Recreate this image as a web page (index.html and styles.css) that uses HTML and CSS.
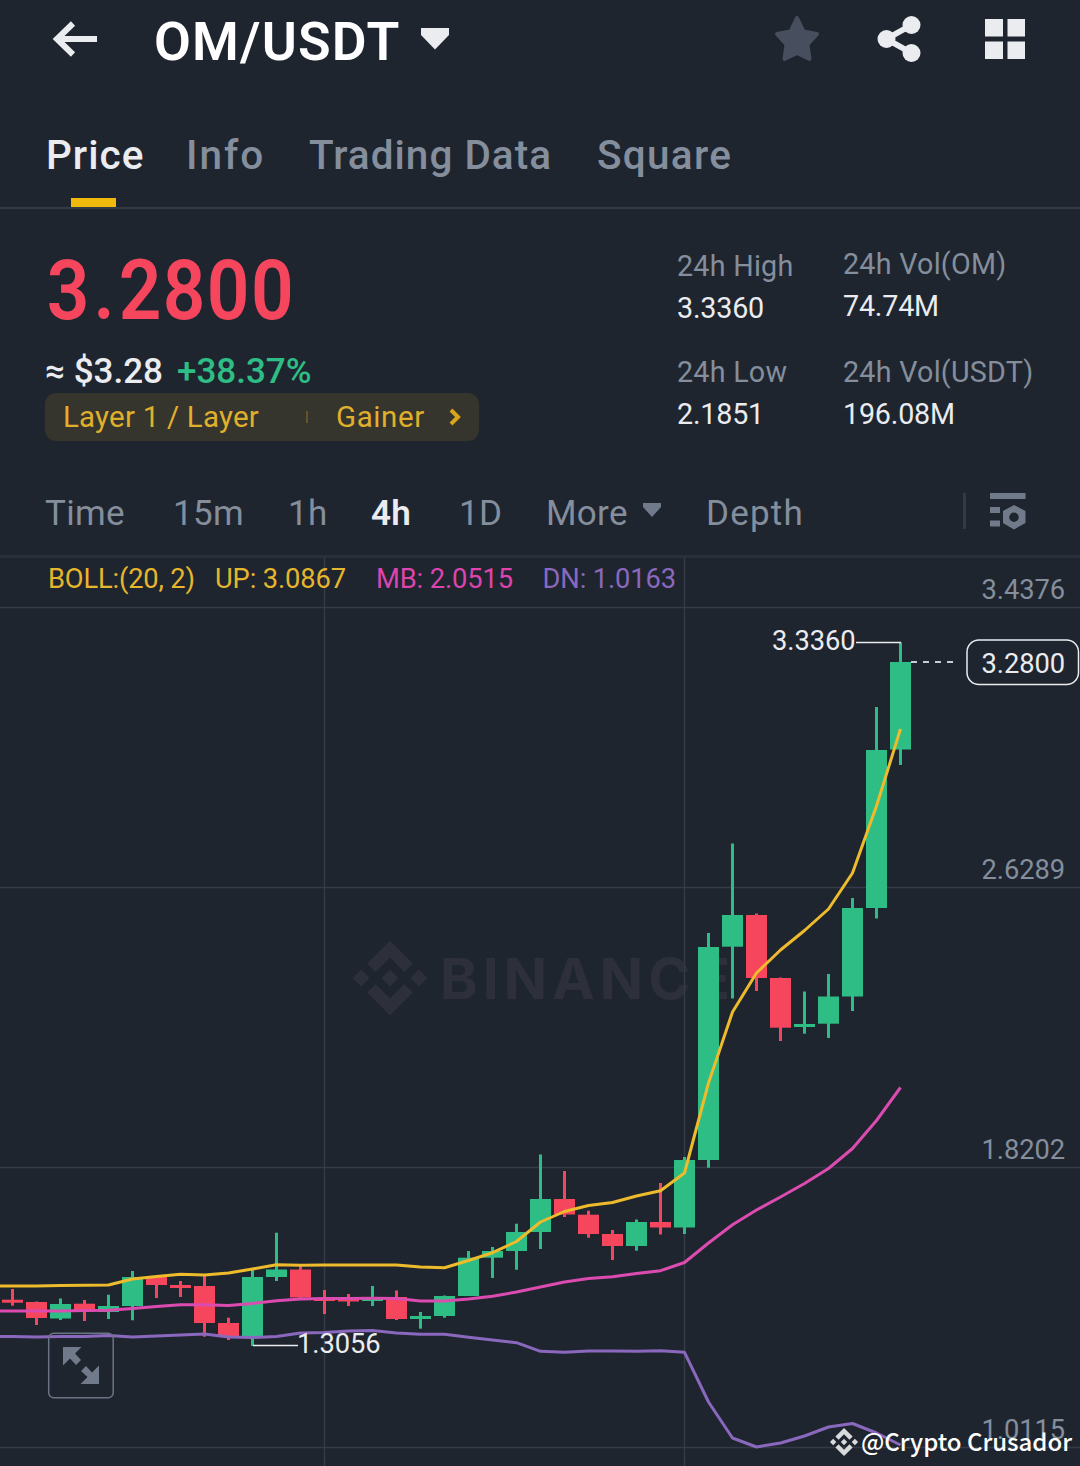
FILE: index.html
```html
<!DOCTYPE html>
<html lang="en">
<head>
<meta charset="utf-8">
<title>OM/USDT</title>
<link rel="stylesheet" href="styles.css">
</head>
<body>
<header class="topbar">
  <svg class="back" viewBox="0 0 46 36"><path d="M21 2.500L5 18L21 33.500M4 18H45" fill="none" stroke="#eaecef" stroke-width="6"/></svg>
  <h1 class="pair">OM/USDT</h1>
  <svg class="pair-caret" viewBox="0 0 28 22"><path d="M0 0H28V7L14 21.500L0 7Z" fill="#eaecef"/></svg>
  <div class="actions">
    <svg class="star" viewBox="0 0 46 48"><path d="M23 3L29.500 16.500L43 19L33.500 29.500L35.500 44L23 38L10.500 44L12.500 29.500L3 19L16.500 16.500Z" fill="#474f5e" stroke="#474f5e" stroke-width="4" stroke-linejoin="round"/></svg>
    <svg class="share" viewBox="0 0 44 46"><g fill="#eaecef"><circle cx="9.500" cy="23" r="9"/><circle cx="34.500" cy="9" r="9"/><circle cx="34.500" cy="37" r="9"/></g><path d="M34.500 9L9.500 23L34.500 37" fill="none" stroke="#eaecef" stroke-width="6"/></svg>
    <svg class="grid" viewBox="0 0 40 40"><path d="M0 0h18v17.500H0zM22.500 0H40v17.500H22.500zM0 22.500h18V40H0zM22.500 22.500H40V40H22.500z" fill="#eaecef"/></svg>
  </div>
</header>

<nav class="tabs">
  <span class="tab tab-price active">Price</span>
  <span class="tab tab-info">Info</span>
  <span class="tab tab-data">Trading Data</span>
  <span class="tab tab-square">Square</span>
</nav>

<section class="summary">
  <div class="quote">
    <div class="last">3<span class="dot">.</span>2800</div>
    <div class="fiat"><span class="usd">≈ $3.28</span><span class="change">+38.37%</span></div>
    <div class="tags">
      <span class="tag-layer">Layer 1 / Layer</span>
      <i class="tag-sep"></i>
      <span class="tag-gainer">Gainer</span>
      <svg class="tag-arrow" viewBox="0 0 12 18"><path d="M2 2L9 9L2 16" fill="none" stroke="#d9a51c" stroke-width="4"/></svg>
    </div>
  </div>
  <dl class="stats stats-range">
    <dt>24h High</dt><dd>3.3360</dd>
    <dt>24h Low</dt><dd>2.1851</dd>
  </dl>
  <dl class="stats stats-volume">
    <dt>24h Vol(OM)</dt><dd>74.74M</dd>
    <dt>24h Vol(USDT)</dt><dd>196.08M</dd>
  </dl>
</section>

<nav class="frames">
  <span>Time</span>
  <span>15m</span>
  <span>1h</span>
  <span class="active">4h</span>
  <span>1D</span>
  <span>More<svg class="more-caret" viewBox="0 0 18 14"><path d="M0 0H18V4L9 14L0 4Z" fill="#717a8a"/></svg></span>
  <span class="depth">Depth</span>
  <i class="frames-sep"></i>
  <svg class="settings" viewBox="0 0 36 37"><path d="M0 0H35.500V6H0zM0 14H10V20H0zM0 27.500H10V33.500H0zM24 12L35.500 18V30L24 36.500L13 30V18ZM24 19.500A4.700 4.700 0 1 0 24 29A4.700 4.700 0 1 0 24 19.500Z" fill="#717a8a" fill-rule="evenodd"/></svg>
</nav>

<svg class="chart" viewBox="0 558 1080 908">
  <defs>
    <path id="mark" d="M16.624 13.9202l2.7175 2.7154-7.353 7.353-7.353-7.352 2.7175-2.7164 4.6355 4.6595 4.6356-4.6595zm4.6366-4.6366L24 12l-2.7154 2.7164L18.5682 12l2.6924-2.7164zm-9.272.001l2.7163 2.6914-2.7164 2.7174v-.001L9.2721 12l2.7164-2.7154zm-9.2722-.001L5.4088 12l-2.6914 2.6924L0 12l2.7164-2.7164zM11.9885.0115l7.353 7.329-2.7174 2.7154-4.6356-4.6356-4.6355 4.6595-2.7174-2.7154 7.353-7.353z"/>
  </defs>
  <g class="watermark">
    <use href="#mark" transform="translate(352.700 940.700) scale(3.110)"/>
    <text x="440" y="998.500" textLength="290">BINANCE</text>
  </g>
  <path class="gridlines" d="M0 607.500H1080M0 887.500H1080M0 1167.500H1080M0 1447.500H1080M324.500 558V1466M684.500 558V1466"/>
  <g id="candles"></g>
  <g id="bands"></g>
  <g class="legend">
    <text class="up" x="48" y="587.700" textLength="147">BOLL:(20, 2)</text>
    <text class="up" x="215" y="587.700" textLength="131">UP: 3.0867</text>
    <text class="mb" x="376" y="587.700" textLength="137">MB: 2.0515</text>
    <text class="dn" x="542.500" y="587.700" textLength="133.500">DN: 1.0163</text>
  </g>
  <g class="axis">
    <text x="981.500" y="599" textLength="83.500">3.4376</text>
    <text x="981.500" y="879" textLength="83.500">2.6289</text>
    <text x="981.500" y="1159" textLength="83.500">1.8202</text>
    <text x="981.500" y="1439" textLength="83.500">1.0115</text>
  </g>
  <g class="callouts">
    <path d="M856 642.500H901M253 1345.500H298"/>
    <path class="dash" d="M911 662H956"/>
    <rect x="967" y="640" width="111.500" height="44.500" rx="12"/>
    <text x="772" y="650" textLength="83.500">3.3360</text>
    <text x="981.500" y="672.700" textLength="83.500">3.2800</text>
    <text x="297" y="1353" textLength="83.500">1.3056</text>
  </g>
  <g class="expand">
    <rect x="48.700" y="1333.200" width="64.500" height="64.500" rx="5"/>
    <path d="M63 1347H81.500L75 1353.500L81 1360L76 1365L70 1358.500L63 1365.500ZM99 1384H80.500L87.500 1377L81 1371L86 1366L92 1372.500L99 1365.500Z"/>
  </g>
  <g class="credit">
    <use href="#mark" transform="translate(830 1428) scale(1.170)"/>
    <text x="861" y="1450.700" textLength="211">@Crypto Crusador</text>
  </g>
</svg>
<script src="chart.js"></script>
</body>
</html>
```
FILE: styles.css
```css
* { box-sizing: border-box; }
body {
  margin: 0;
  width: 1080px;
  height: 1466px;
  overflow: hidden;
  background: #1f252f;
  color: #eaecef;
  font-family: Roboto, "Liberation Sans", sans-serif;
}
svg { display: block; flex: none; }

.topbar { display: flex; align-items: center; height: 84px; padding: 0 55px 0 52px; }
.back { width: 46px; height: 36px; margin-top: -6px; }
.pair { margin: 0 0 0 56px; width: 267px; font-size: 53.500px; line-height: 60px; font-weight: 600; letter-spacing: 1.200px; color: #fff; white-space: nowrap; }
.pair-caret { width: 28px; height: 22px; margin-top: -7px; }
.actions { display: flex; align-items: center; margin: -6px 0 0 auto; }
.star { width: 46px; height: 48px; margin-right: 57px; }
.share { width: 44px; height: 46px; margin-right: 64px; }
.grid { width: 40px; height: 40px; }

.tabs { display: flex; height: 125px; padding: 46px 0 0 45px; border-bottom: 2px solid #333a45; }
.tab { position: relative; padding-top: 1px; font-size: 40.500px; line-height: 48px; font-weight: 500; letter-spacing: 1px; color: #848e9c; white-space: nowrap; }
.tab.active { color: #eaecef; }
.tab.active::after { content: ""; position: absolute; left: 26px; bottom: 0; width: 45px; height: 9px; background: #f0b90b; }
.tab-price { width: 141px; height: 77px; text-indent: 1px; }
.tab-info { width: 123px; letter-spacing: 2px; }
.tab-data { width: 288px; }
.tab-square { letter-spacing: 1.300px; }

.summary { display: flex; height: 261px; padding: 34px 0 0 45px; white-space: nowrap; }
.quote { width: 632px; padding-top: 6px; }
.last { width: 300px; font-size: 83px; line-height: 84px; font-weight: 600; letter-spacing: 1.500px; text-indent: 2px; color: #f6465d; transform: scaleX(.9); transform-origin: left; }
.dot { padding: 0 3px; }
.fiat { display: flex; margin-top: 16px; padding-top: 1px; font-size: 35px; line-height: 43px; font-weight: 500; }
.usd { width: 132px; }
.change { color: #2ebd85; }
.tags { display: flex; align-items: center; width: 434px; height: 48px; padding: 0 0 0 18px; border-radius: 11px; background: #35342d; font-size: 29.500px; letter-spacing: .2px; color: #e0b02c; }
.tag-layer { width: 243px; }
.tag-sep { width: 2px; height: 12px; margin-right: 28px; background: #66532a; }
.tag-gainer { width: 113px; letter-spacing: .6px; }
.tag-arrow { width: 12px; height: 18px; }
.stats { margin: 0; font-size: 28.700px; line-height: 42px; }
.stats dt { color: #848e9c; letter-spacing: .25px; }
.stats dd { margin: 0 0 24px; letter-spacing: -.2px; }
.stats-range { width: 166px; padding-top: 2px; }
.stats-range dd { margin-bottom: 22px; }

.frames { display: grid; grid-template-columns: 128px 115px 83px 88px 87px 160px 257px 27px 36px; align-items: center; height: 88px; padding: 3px 0 0 45px; border-bottom: 3px solid #2a303b; font-size: 35px; line-height: 44px; color: #848e9c; white-space: nowrap; }
.frames span { display: flex; align-items: center; letter-spacing: .3px; }
.frames .depth { letter-spacing: 1.200px; }
.frames .active { color: #eaecef; font-weight: 600; }
.more-caret { width: 18px; height: 14px; margin: -9px 0 0 15px; }
.frames-sep { width: 3px; height: 36px; margin-top: -6px; background: #333a45; }
.settings { width: 36px; height: 37px; margin-top: -5px; }

.chart { width: 1080px; height: 908px; font-size: 27.300px; }
.gridlines { stroke: #343a46; stroke-width: 1.500; }
.watermark { fill: #2d303b; }
.watermark text { font: 700 57px Inter, sans-serif; }
.rise { fill: #2ebd85; }
.fall { fill: #f6465d; }
.band { fill: none; stroke-width: 3; stroke-linejoin: round; }
.band.up { stroke: #edbb2b; }
.band.mb { stroke: #dc4bb0; }
.band.dn { stroke: #8a68be; }
.legend .up { fill: #e6b62c; }
.legend .mb { fill: #dc44ae; }
.legend .dn { fill: #8a68be; }
.axis { fill: #848e9c; }
.callouts path, .callouts rect { fill: none; stroke: #eaecef; stroke-width: 1.500; }
.callouts .dash { stroke-width: 2; stroke: #c9ccd2; stroke-dasharray: 6 6; }
.callouts text { fill: #eaecef; }
.expand rect { fill: none; stroke: #6b7485; stroke-width: 1.500; }
.expand path { fill: #717a8a; }
.credit { fill: #d9dadc; }
.credit text { fill: #fff; font: 500 24px "Noto Sans CJK SC", "Noto Sans", sans-serif; }
```
FILE: chart.js
```js
// Candles: [rising, body top, body bottom, wick top, wick bottom], 24px apart.
const candles = [
  [0,1299.7,1302.7,1289,1305.7],[0,1302,1318,1301.5,1325],[1,1304,1318.5,1298.5,1320],
  [0,1303.7,1312,1300,1321],[1,1306,1312,1294.7,1319],[1,1277,1306,1271,1320.3],
  [0,1277,1285,1277,1298],[0,1285,1288,1281,1297],[0,1286,1323,1276,1336.7],
  [0,1323,1336.7,1317.7,1340],[1,1277,1336.7,1269.5,1346],[1,1269.5,1277,1232.7,1281],
  [0,1269.5,1297.5,1266,1298],[0,1298,1301,1290,1314],[0,1298.5,1301.5,1294,1306],
  [1,1298,1301,1286,1306],[0,1297,1319,1290.5,1320],[1,1316,1319,1312,1328.7],
  [1,1296,1316,1295.5,1317.7],[1,1257.7,1296,1251,1296],[1,1251,1257.7,1247,1278],
  [1,1232,1251,1223.7,1269.7],[1,1199,1232,1154.5,1249],[0,1199,1214.5,1171,1217],
  [0,1214.7,1234,1210.7,1237.7],[0,1234,1246,1230,1260],[1,1222,1246,1219.5,1250.7],
  [0,1222,1227.5,1183,1234.5],[1,1160,1227.5,1157,1234],[1,947,1160,933,1167.7],
  [1,915,946.7,843.5,998.5],[0,915,978,913.5,991],[0,978,1027.7,977.5,1041],
  [1,1024,1027,991.5,1033.7],[1,996.5,1023.7,974,1038],[1,908,996.5,898,1011],
  [1,750,908,707,918.5],[1,662,749.5,642.5,765]
];
const bands = {
  up: [1286,1286,1285.5,1285.3,1285,1279,1276.5,1274.3,1275,1273,1269,1264.7,1265.3,1265,1265,1265,1265,1267,1267.7,1260.5,1252.7,1241.5,1222,1211.5,1205.5,1202.5,1196,1190.7,1173,1083,1012,973,950,930.5,909,873,806,729],
  mb: [1311,1311,1311,1310.5,1310.3,1308.5,1306.5,1304.7,1304.7,1305.5,1303.5,1300.7,1299,1298.5,1298.5,1298.3,1298.5,1301,1301,1299,1296.3,1292,1287,1282,1278.5,1276.7,1273.5,1270.7,1262.5,1243,1224.7,1210,1197,1183.5,1168.5,1148.5,1120.5,1087.5],
  dn: [1336.5,1337,1336.5,1336.5,1335.5,1337,1336,1335,1334,1337,1337.5,1336.5,1333,1332.5,1331,1330.5,1333,1334.3,1334.3,1337.3,1340,1342.7,1351.3,1352.3,1351,1351,1351.3,1350.7,1352.3,1402,1438,1447,1443,1436,1427,1423.5,1433,1445]
};
const center = i => 12.5 + 24 * i;
document.getElementById("candles").innerHTML = candles.map(([up, top, bottom, high, low], i) => {
  const x = center(i);
  return `<g class="${up ? "rise" : "fall"}"><rect x="${x - 1.5}" y="${high}" width="3" height="${low - high}"/>` +
    `<rect x="${x - 10.5}" y="${top}" width="21" height="${bottom - top}"/></g>`;
}).join("");
document.getElementById("bands").innerHTML = Object.entries(bands).map(([name, ys]) =>
  `<polyline class="band ${name}" points="0,${ys[0]} ${ys.map((y, i) => center(i) + "," + y).join(" ")}"/>`
).join("");
```
